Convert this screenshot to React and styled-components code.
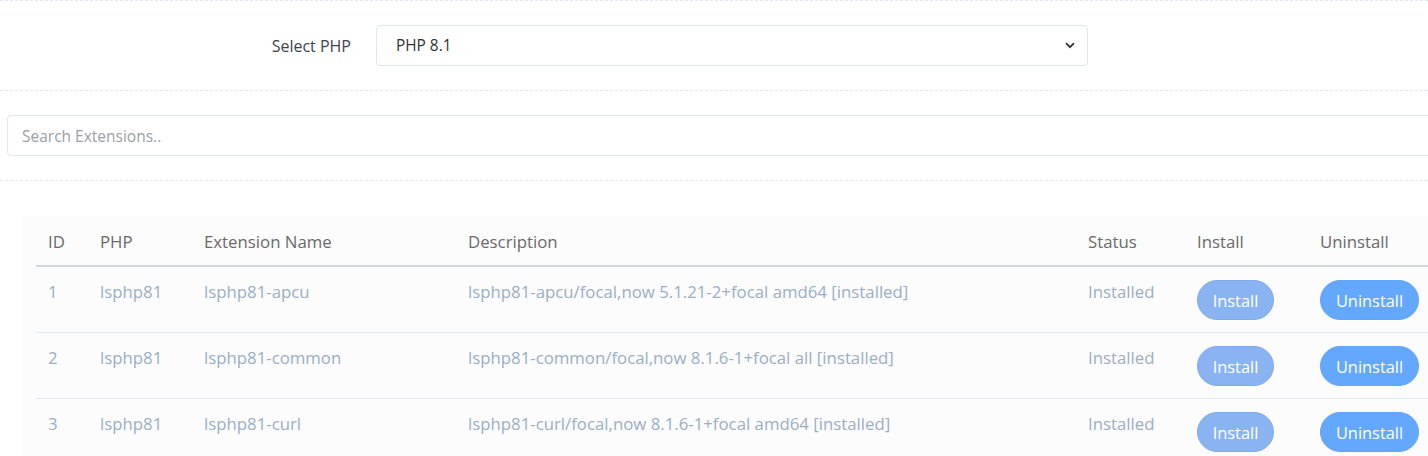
import React from "react";
import styled, { createGlobalStyle } from "styled-components";

const Global = createGlobalStyle`
  html, body { margin: 0; padding: 0; background: #fff; }
  body { font-family: "Open Sans", "Noto Sans", sans-serif; overflow: hidden; width: 1428px; }
  * { box-sizing: border-box; }
`;

const Page = styled.div`
  width: 1428px;
  height: 456px;
  overflow: hidden;
  border-top: 1px dashed #e1e7f0;
`;

const Section = styled.div`
  border-bottom: 1px dashed #e1e7f0;
  padding: ${(p) => p.$pad};
`;

const SelectRow = styled.div`
  display: grid;
  grid-template-columns: 351px 712px;
  column-gap: 25px;
  align-items: center;
`;

const Label = styled.label`
  text-align: right;
  font-size: 16px;
  color: #3d4350;
  line-height: 22px;
`;

const SelectBox = styled.div`
  height: 41px;
  border: 1px solid #e1e7ef;
  border-radius: 4px;
  display: flex;
  align-items: center;
  justify-content: space-between;
  padding: 0 12px 0 19px;
  font-size: 15.4px;
  color: #333;
  background: #fff;
`;

const SearchInput = styled.input`
  display: block;
  margin-left: 7px;
  width: 1440px;
  height: 41px;
  border: 1px solid #e1e7ef;
  border-radius: 4px;
  padding: 0 14px;
  font-family: "Open Sans", "Noto Sans", sans-serif;
  font-size: 15.5px;
  color: #333;
  outline: none;
  &::placeholder { color: #9ba0a8; }
`;

const Panel = styled.div`
  margin: 35px 0 0 22px;
  width: 1440px;
  background: #fcfcfd;
  padding: 0 14px;
`;

const Table = styled.table`
  border-collapse: collapse;
  width: 1420px;
  table-layout: fixed;
`;

const Th = styled.th`
  text-align: left;
  font-weight: 400;
  font-size: 16.8px;
  line-height: 24px;
  color: #6b6969;
  padding: 14px 12px 11px;
  border-bottom: 2px solid #d3d8df;
`;

const Td = styled.td`
  vertical-align: top;
  font-size: 16.8px;
  line-height: 24px;
  color: #9aafc3;
  padding: 13px 12px 12px;
  border-bottom: 1px solid #e3e9f1;
`;

const Pill = styled.button`
  height: 40px;
  border-radius: 20px;
  border: 1px solid ${(p) => (p.$muted ? "#82abea" : "#62a5fb")};
  background: ${(p) => (p.$muted ? "#89b4f1" : "#64a8fd")};
  color: #fff;
  font-family: "Open Sans", "Noto Sans", sans-serif;
  font-size: 16.4px;
  width: ${(p) => (p.$muted ? "77px" : "99px")};
  padding: 0;
  display: flex;
  align-items: center;
  justify-content: center;
  cursor: pointer;
`;

const rows = [
  { id: 1, name: "lsphp81-apcu", desc: "lsphp81-apcu/focal,now 5.1.21-2+focal amd64 [installed]" },
  { id: 2, name: "lsphp81-common", desc: "lsphp81-common/focal,now 8.1.6-1+focal all [installed]" },
  { id: 3, name: "lsphp81-curl", desc: "lsphp81-curl/focal,now 8.1.6-1+focal amd64 [installed]" },
];

const Chevron = () => (
  <svg width="10" height="7" viewBox="0 0 10 7" fill="none">
    <path d="M1 1.2 L5 5.2 L9 1.2" stroke="#333" strokeWidth="1.8" />
  </svg>
);

export default function App() {
  return (
    <>
      <Global />
      <Page>
        <Section $pad="24px 0 24px 0">
          <SelectRow>
            <Label>Select PHP</Label>
            <SelectBox>
              <span>PHP 8.1</span>
              <Chevron />
            </SelectBox>
          </SelectRow>
        </Section>
        <Section $pad="24px 0 24px 0">
          <SearchInput placeholder="Search Extensions.." />
        </Section>
        <Panel>
          <Table>
            <colgroup>
              <col style={{ width: 52 }} />
              <col style={{ width: 104 }} />
              <col style={{ width: 264 }} />
              <col style={{ width: 620 }} />
              <col style={{ width: 109 }} />
              <col style={{ width: 123 }} />
              <col style={{ width: 148 }} />
            </colgroup>
            <thead>
              <tr>
                <Th>ID</Th>
                <Th>PHP</Th>
                <Th>Extension Name</Th>
                <Th>Description</Th>
                <Th>Status</Th>
                <Th>Install</Th>
                <Th>Uninstall</Th>
              </tr>
            </thead>
            <tbody>
              {rows.map((r) => (
                <tr key={r.id}>
                  <Td>{r.id}</Td>
                  <Td>lsphp81</Td>
                  <Td>{r.name}</Td>
                  <Td>{r.desc}</Td>
                  <Td>Installed</Td>
                  <Td>
                    <Pill $muted>Install</Pill>
                  </Td>
                  <Td>
                    <Pill>Uninstall</Pill>
                  </Td>
                </tr>
              ))}
            </tbody>
          </Table>
        </Panel>
      </Page>
    </>
  );
}
